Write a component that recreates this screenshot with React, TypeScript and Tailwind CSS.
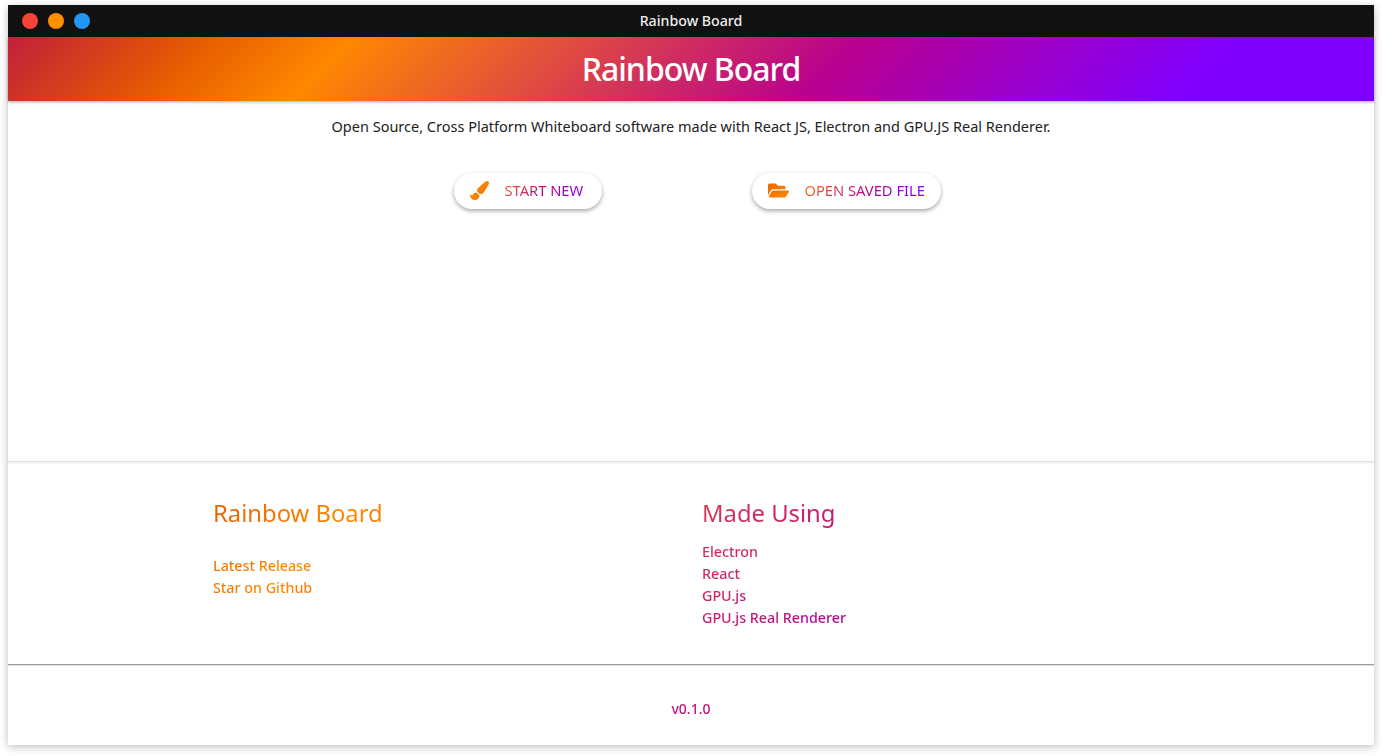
import { FaPaintBrush, FaFolderOpen } from "react-icons/fa";

const rainbow =
  "bg-[linear-gradient(135deg,#c21f3a_0%,#e65c00_14%,#ff8800_24%,#b8008f_60%,#8000ff_86%)]";

const fontStack = "font-['Noto_Sans','Open_Sans',sans-serif]";

function IconGradients() {
  return (
    <svg className="absolute w-0 h-0">
      <defs>
        <linearGradient id="brushFill" x1="0" y1="0" x2="1" y2="1">
          <stop offset="0%" stopColor="#ff8800" />
          <stop offset="100%" stopColor="#f77700" />
        </linearGradient>
        <linearGradient id="folderFill" x1="0" y1="0" x2="1" y2="1">
          <stop offset="0%" stopColor="#ec6a00" />
          <stop offset="100%" stopColor="#ff8800" />
        </linearGradient>
      </defs>
    </svg>
  );
}

function TitleBar() {
  return (
    <div className="relative h-8 bg-[#111111] flex items-center pl-3.5 gap-2.5">
      <span className="w-4 h-4 rounded-full bg-[#f44336]" />
      <span className="w-4 h-4 rounded-full bg-[#ff9100]" />
      <span className="w-4 h-4 rounded-full bg-[#2196f3]" />
      <span className="absolute inset-0 flex items-center justify-center text-[14.2px] font-medium text-[#eeeeee]">
        Rainbow Board
      </span>
    </div>
  );
}

function ActionButton({ icon, label, width }: { icon: React.ReactNode; label: string; width: string }) {
  return (
    <button className={`${width} h-9 rounded-[18px] bg-white shadow-[0_2px_4px_rgba(0,0,0,0.35)] relative`}>
      <span className={`h-full flex items-center pl-4 pb-0.5 gap-4 text-[14.7px] text-transparent bg-clip-text ${rainbow}`}>
        {icon}
        {label}
      </span>
    </button>
  );
}

export default function App() {
  return (
    <div className={`w-[1382px] h-[756px] bg-white pt-[5px] px-2 overflow-hidden ${fontStack}`}>
      <IconGradients />
      <div className="w-[1366px] h-[740px] flex flex-col bg-white shadow-[0_2px_8px_rgba(0,0,0,0.25)]">
        <TitleBar />
        <header className={`h-16 flex items-center justify-center shadow-[0_1px_3px_rgba(0,0,0,0.35)] ${rainbow}`}>
          <h1 className="text-[32px] font-medium text-white tracking-[-1px]">Rainbow Board</h1>
        </header>

        <main className="h-[361px] flex flex-col items-center border-b border-[#e0e0e0] shadow-[0_1px_2px_rgba(0,0,0,0.08)]">
          <p className="mt-[15px] text-[14.5px] leading-5 text-[#222222]">
            Open Source, Cross Platform Whiteboard software made with React JS, Electron and GPU.JS Real Renderer.
          </p>
          <div className="mt-[37px] ml-3 flex gap-[150px]">
            <ActionButton
              width="w-[148px]"
              label="START NEW"
              icon={<FaPaintBrush className="w-[19px] h-[19px] fill-[url(#brushFill)]" />}
            />
            <ActionButton
              width="w-[189px]"
              label="OPEN SAVED FILE"
              icon={<FaFolderOpen className="w-[21px] h-[21px] fill-[url(#folderFill)]" />}
            />
          </div>
        </main>

        <footer className={`flex-1 flex flex-col text-transparent bg-clip-text ${rainbow}`}>
          <div className="h-[202px] flex pl-[205px]">
            <div className="w-[489px]">
              <h2 className="mt-[33px] text-[23.8px] leading-9">Rainbow Board</h2>
              <ul className="mt-[24px] text-[14.3px] font-medium leading-[22px]">
                <li>Latest Release</li>
                <li>Star on Github</li>
              </ul>
            </div>
            <div>
              <h2 className="mt-[33px] text-[23.8px] leading-9">Made Using</h2>
              <ul className="mt-[10px] text-[14.3px] font-medium leading-[22px]">
                <li>Electron</li>
                <li>React</li>
                <li>GPU.js</li>
                <li>GPU.js Real Renderer</li>
              </ul>
            </div>
          </div>
          <div className="h-px bg-[#999999] shadow-[0_1px_1px_rgba(0,0,0,0.15)]" />
          <div className="flex-1 flex items-center justify-center pt-[6px] text-[14px] font-medium">v0.1.0</div>
        </footer>
      </div>
    </div>
  );
}
